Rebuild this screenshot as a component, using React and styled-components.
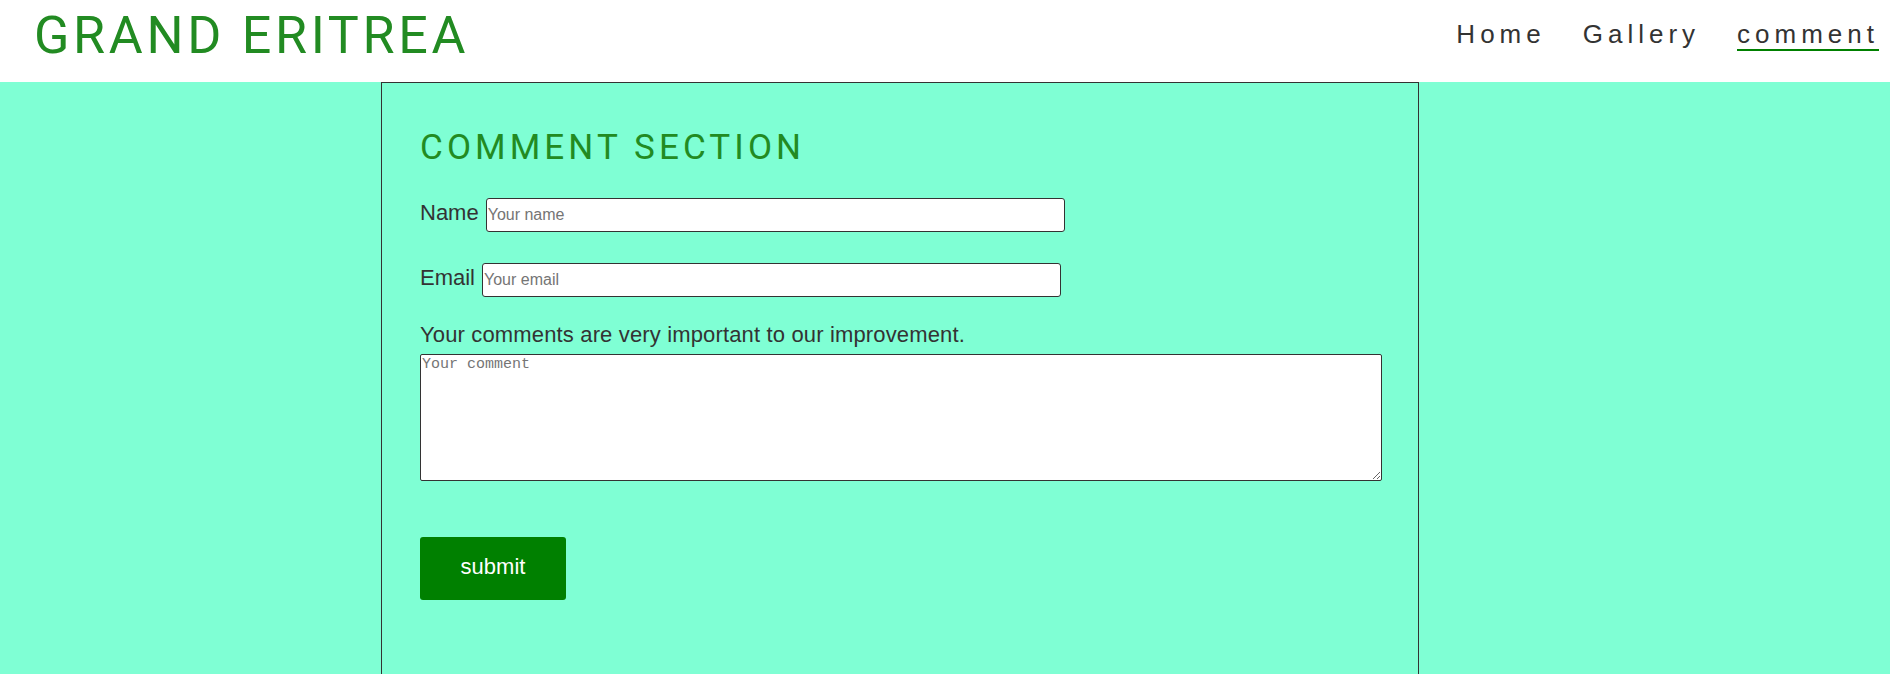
import React from 'react';
import styled, { createGlobalStyle } from 'styled-components';

const GlobalStyle = createGlobalStyle`
  * {
    box-sizing: border-box;
  }
  body {
    margin: 0;
    background-color: aquamarine;
    font-family: 'Liberation Sans', Arial, sans-serif;
    color: #333;
  }
`;

const Header = styled.header`
  display: flex;
  justify-content: space-between;
  align-items: flex-start;
  height: 82px;
  background-color: #fff;
  padding: 0 11px 0 34px;
`;

const Logo = styled.h1`
  margin: 0;
  padding-top: 5px;
  font-family: Roboto, sans-serif;
  font-weight: 400;
  font-size: 52px;
  line-height: 61px;
  letter-spacing: 3.7px;
  color: forestgreen;
`;

const Nav = styled.nav`
  display: flex;
  gap: 37px;
  padding-top: 19px;
`;

const NavLink = styled.a`
  font-size: 26px;
  line-height: 30px;
  letter-spacing: 5px;
  color: #333;
  text-decoration: none;
  border-bottom: 2px solid ${(p) => (p.$active ? 'green' : 'transparent')};
`;

const Section = styled.section`
  margin-left: 381px;
  width: 1038px;
  min-height: 640px;
  border: 1px solid #333;
  border-bottom: none;
  padding: 45px 36px 0 38px;
`;

const Title = styled.h2`
  margin: 0 0 30px;
  font-family: Roboto, sans-serif;
  font-weight: 400;
  font-size: 35px;
  line-height: 40px;
  letter-spacing: 4.1px;
  color: forestgreen;
`;

const Field = styled.div`
  display: flex;
  align-items: flex-start;
  gap: 7px;
  margin-bottom: ${(p) => p.$gap || 31}px;
`;

const Label = styled.label`
  margin-top: 2px;
  font-size: 22px;
  line-height: 25px;
`;

const TextInput = styled.input`
  width: 579px;
  height: 34px;
  padding: 1px;
  border: 1px solid #333;
  border-radius: 3px;
  background: #fff;
  font-family: 'Liberation Sans', Arial, sans-serif;
  font-size: 16px;
  &::placeholder {
    color: #757575;
  }
`;

const Note = styled.p`
  margin: 0 0 7px;
  font-size: 22px;
  line-height: 25px;
  letter-spacing: 0.15px;
`;

const CommentBox = styled.textarea`
  display: block;
  width: 962px;
  height: 127px;
  padding: 1px;
  border: 1px solid #333;
  border-radius: 2px;
  background: #fff;
  font-family: 'Liberation Mono', monospace;
  font-size: 15px;
  &::placeholder {
    color: #757575;
  }
`;

const SubmitButton = styled.button`
  margin-top: 56px;
  width: 146px;
  height: 63px;
  padding: 0 0 3px;
  border: none;
  border-radius: 3px;
  background-color: green;
  color: #fff;
  font-family: 'Liberation Sans', Arial, sans-serif;
  font-size: 22px;
  cursor: pointer;
`;

export default function App() {
  return (
    <>
      <GlobalStyle />
      <Header>
        <Logo>GRAND ERITREA</Logo>
        <Nav>
          <NavLink href="#">Home</NavLink>
          <NavLink href="#">Gallery</NavLink>
          <NavLink href="#" $active>comment</NavLink>
        </Nav>
      </Header>
      <Section>
        <Title>COMMENT SECTION</Title>
        <form onSubmit={(e) => e.preventDefault()}>
          <Field>
            <Label htmlFor="name">Name</Label>
            <TextInput id="name" type="text" placeholder="Your name" />
          </Field>
          <Field $gap={25}>
            <Label htmlFor="email">Email</Label>
            <TextInput id="email" type="email" placeholder="Your email" />
          </Field>
          <Note>Your comments are very important to our improvement.</Note>
          <CommentBox placeholder="Your comment" />
          <SubmitButton type="submit">submit</SubmitButton>
        </form>
      </Section>
    </>
  );
}
